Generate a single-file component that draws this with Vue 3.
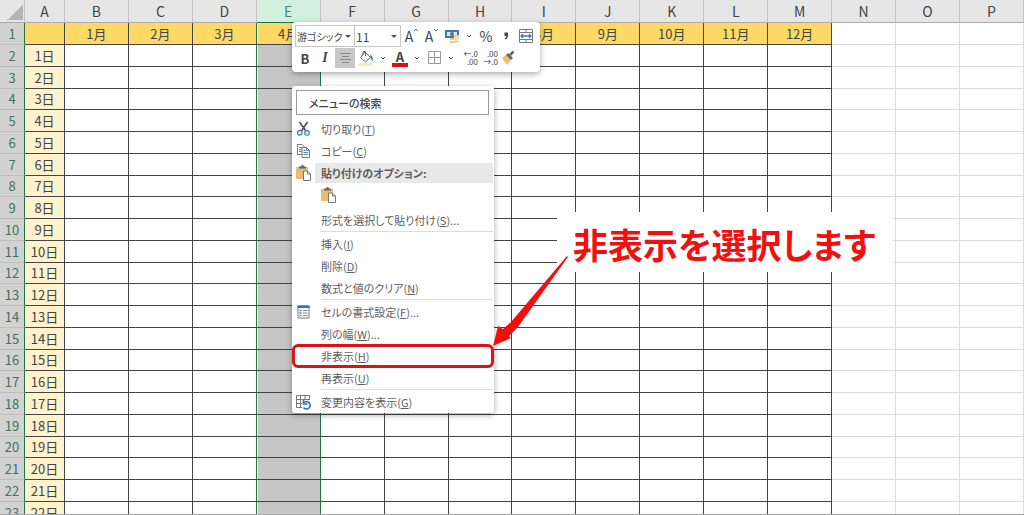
<script setup>
const columns = 'ABCDEFGHIJKLMNOP'.split('')
const rows = Array.from({ length: 23 }, (_, i) => i + 1)

function cellText(row, col) {
  if (row === 1) return col > 0 && col < 13 ? `${col}月` : ''
  return col === 0 ? `${row - 1}日` : ''
}

function cellClass(row, col) {
  return {
    month: row === 1 && col < 13,
    day: row > 1 && col === 0,
    lined: col < 13,
    picked: col === 4,
    before: col === 3,
  }
}

const groups = [
  [
    { icon: 'cut', label: '切り取り', key: 'T' },
    { icon: 'copy', label: 'コピー', key: 'C' },
    { icon: 'paste', heading: '貼り付けのオプション:' },
    { option: true },
    { label: '形式を選択して貼り付け', key: 'S', tail: '...' },
  ],
  [
    { label: '挿入', key: 'I' },
    { label: '削除', key: 'D' },
    { label: '数式と値のクリア', key: 'N' },
  ],
  [
    { icon: 'format', label: 'セルの書式設定', key: 'F', tail: '...' },
    { label: '列の幅', key: 'W', tail: '...' },
    { label: '非表示', key: 'H', marked: true },
    { label: '再表示', key: 'U' },
  ],
  [{ icon: 'changes', label: '変更内容を表示', key: 'G' }],
]
</script>

<template>
  <main class="workbook">
    <svg class="defs" aria-hidden="true">
      <symbol id="cut" viewBox="0 0 16 16">
        <path d="M3.500 1l6.500 9M11.500 1L5.500 10" stroke="#555" stroke-width="1.700" fill="none" />
        <circle cx="3.800" cy="11.800" r="2.300" fill="none" stroke="#4f86b8" stroke-width="1.300" />
        <circle cx="11" cy="11.800" r="2.300" fill="none" stroke="#4f86b8" stroke-width="1.300" />
      </symbol>
      <symbol id="copy" viewBox="0 0 16 16">
        <path d="M1.500 1.500h4.500l2.500 2.500v7.500h-7z" fill="#fff" stroke="#777" />
        <path d="M3 4.500h3M3 6.500h3M3 8.500h3" stroke="#4f86b8" />
        <path d="M6 4.500h4.500l3 3v7H6z" fill="#fff" stroke="#777" />
        <path d="M10.500 4.500v3h3" fill="none" stroke="#777" />
        <path d="M7.500 9.500H12M7.500 11.500H12M7.500 7.500h2" stroke="#4f86b8" />
      </symbol>
      <symbol id="paste" viewBox="0 0 16 16">
        <path d="M0 2h12v12H0z" fill="#e8bd72" />
        <path d="M3 3.500v-2h2a1.500 1.500 0 013 0h2v2z" fill="#666" />
        <path d="M7.500 6h4l3 3v6.500h-7z" fill="#fff" stroke="#777" />
        <path d="M11.500 6v3h3" fill="none" stroke="#777" />
      </symbol>
      <symbol id="format" viewBox="0 0 16 16">
        <path d="M2 2h11v12H2z" fill="#fff" stroke="#777" />
        <path d="M1.500 1.500h12v2.500h-12z" fill="#41719c" />
        <path d="M3.500 6.500h2M3.500 9h2M3.500 11.500h2" stroke="#4f86b8" stroke-width="1.500" />
        <path d="M7 6.500h4.500M7 9h4.500M7 11.500h4.500" stroke="#888" />
      </symbol>
      <symbol id="changes" viewBox="0 0 16 16">
        <path d="M.5 13.500v-12h13V6M.5 13.500H6M.5 5.500h13M.5 9.500H6M4.500 1.500v12M9 1.500V6" fill="none" stroke="#777" />
        <path d="M8 8.500a3.700 3.700 0 11-.5 5" fill="none" stroke="#2f75b5" stroke-width="1.600" />
        <path d="M7.500 6v4h4" fill="none" stroke="#2f75b5" stroke-width="1.600" />
      </symbol>
      <symbol id="chevron" viewBox="0 0 6 4">
        <path d="M1 1l2 2 2-2" fill="none" stroke="#555" />
      </symbol>
    </svg>

    <table class="sheet">
      <colgroup>
        <col class="col-num" />
        <col class="col-day" />
        <col v-for="n in 15" :key="n" />
      </colgroup>
      <thead>
        <tr>
          <th class="corner"></th>
          <th v-for="(c, i) in columns" :key="c" scope="col" :class="{ active: i === 4 }">{{ c }}</th>
        </tr>
      </thead>
      <tbody>
        <tr v-for="r in rows" :key="r">
          <th scope="row">{{ r }}</th>
          <td v-for="(c, i) in columns" :key="c" :class="cellClass(r, i)">{{ cellText(r, i) }}</td>
        </tr>
      </tbody>
    </table>

    <section class="toolbar" aria-label="書式">
      <div class="tools">
        <span class="drop family"><select aria-label="フォント"><option>游ゴシック</option></select></span>
        <span class="drop size"><select aria-label="サイズ"><option>11</option></select></span>
        <button class="tool letter" aria-label="拡大">A<svg class="hat" viewBox="0 0 6 4"><path d="M1 3l2-2 2 2" fill="none" stroke="#3f78ad" /></svg></button>
        <button class="tool letter" aria-label="縮小">A<svg class="hat" viewBox="0 0 6 4"><path d="M1 1l2 2 2-2" fill="none" stroke="#3f78ad" /></svg></button>
        <button class="tool" aria-label="通貨">
          <svg class="icon" viewBox="0 0 16 16">
            <path d="M1 2h14v8H1z" fill="#3f78ad" />
            <path d="M3 4h10v4H3z" fill="#dce9f4" />
            <circle cx="8" cy="6" r="2" fill="#3f78ad" />
            <path d="M6 10h5v5H6zM10 7h5v7h-5z" fill="#edc88c" />
            <path d="M6 12.500h5M10 9.500h5M10 12h5" stroke="#fff" />
          </svg>
        </button>
        <button class="arrow" aria-label="通貨の種類"><svg viewBox="0 0 6 4"><use href="#chevron" /></svg></button>
        <button class="tool percent">%</button>
        <button class="tool" aria-label="桁区切り">
          <svg class="icon" viewBox="0 0 16 16"><path d="M6.500 4.500h3.500v3c0 2-1 3.500-3 4v-1.500c1-.4 1.300-1 1.300-2H6.500z" fill="#444" /></svg>
        </button>
        <button class="tool" aria-label="セルの結合">
          <svg class="icon" viewBox="0 0 16 16">
            <path d="M1.500 1.500h13v13h-13zM1.500 4.500h13M1.500 11.500h13M8 1.500v3M8 11.500v3" fill="#fff" stroke="#777" />
            <path d="M3 8h10M5 6L3 8l2 2M11 6l2 2-2 2" fill="none" stroke="#3f78ad" stroke-width="1.300" />
          </svg>
        </button>
      </div>
      <div class="tools">
        <button class="tool bold">B</button>
        <button class="tool italic">I</button>
        <button class="tool pressed" aria-label="中央揃え">
          <svg class="icon" viewBox="0 0 16 16"><path d="M3 3.500h11M5 6.500h7M3 9.500h11M5 12.500h7" stroke="#888" /></svg>
        </button>
        <button class="tool fill" aria-label="塗りつぶし">
          <svg class="icon" viewBox="0 0 16 16">
            <path d="M7 2l5.500 5.500-5 4.500-5-4.500z" fill="#fff" stroke="#666" />
            <path d="M5 5V1.500h2.500V6" fill="none" stroke="#666" />
            <path d="M12 5c3 1 3 4 2.500 6-1.500-1-2-2.500-2.500-6z" fill="#3f78ad" />
            <path d="M1 13h13v3H1z" fill="#fbe5c0" />
          </svg>
        </button>
        <button class="arrow" aria-label="塗りつぶしの色"><svg viewBox="0 0 6 4"><use href="#chevron" /></svg></button>
        <button class="tool ink">A</button>
        <button class="arrow" aria-label="文字の色"><svg viewBox="0 0 6 4"><use href="#chevron" /></svg></button>
        <button class="tool" aria-label="罫線">
          <svg class="icon" viewBox="0 0 16 16"><path d="M2.500 1.500h12v12h-12zM8.500 1.500v12M2.500 7.500h12" fill="none" stroke="#999" /></svg>
        </button>
        <button class="arrow" aria-label="罫線の種類"><svg viewBox="0 0 6 4"><use href="#chevron" /></svg></button>
        <button class="tool decimals"><span><i>←</i>.0</span><span>.00</span></button>
        <button class="tool decimals"><span>.00</span><span><i>→</i>.0</span></button>
        <button class="tool" aria-label="書式のコピー">
          <svg class="icon" viewBox="0 0 16 16">
            <path d="M2 8l4-3 5 5-4 5z" fill="#eebd70" />
            <path d="M6 5l2-2 5 5-2 2z" fill="#666" />
            <path d="M10 5l3.500-3.500" stroke="#666" stroke-width="2.500" />
          </svg>
        </button>
      </div>
    </section>

    <section class="menu" aria-label="コンテキスト メニュー">
      <input class="search" type="text" placeholder="メニューの検索" aria-label="メニューの検索" />
      <div v-for="(g, gi) in groups" :key="gi" class="group">
        <template v-for="(m, mi) in g" :key="mi">
          <div v-if="m.heading" class="item heading">
            <svg class="glyph"><use :href="'#' + m.icon" /></svg>
            <span class="label">{{ m.heading }}</span>
          </div>
          <div v-else-if="m.option" class="item option">
            <button aria-label="貼り付け"><svg class="glyph"><use href="#paste" /></svg></button>
          </div>
          <button v-else class="item" :class="{ marked: m.marked }">
            <svg class="glyph"><use v-if="m.icon" :href="'#' + m.icon" /></svg>
            <span class="label">{{ m.label }}(<u>{{ m.key }}</u>){{ m.tail }}</span>
          </button>
        </template>
      </div>
    </section>

    <p class="callout">非表示を選択します</p>
    <svg class="pointer" viewBox="0 0 76 92" aria-hidden="true">
      <path d="M75 1L74 0 18 66 10 73 5 70 0 90 18 82 16 80 25 71z" fill="#f01010" />
    </svg>
  </main>
</template>

<style>
body {
  margin: 0;
  background: #fff;
}
</style>

<style scoped>
.workbook {
  position: relative;
  height: 100vh;
  overflow: hidden;
  box-sizing: border-box;
  border-bottom: 1px solid #a6a6a6;
  font-family: "Noto Sans CJK JP", sans-serif;
  color: #444;
}
.defs {
  position: absolute;
  width: 0;
  height: 0;
}
.sheet {
  width: 100%;
  table-layout: fixed;
  border-collapse: separate;
  border-spacing: 0;
}
.col-num {
  width: 25px;
}
.col-day {
  width: 40px;
}
th,
td {
  box-sizing: border-box;
  height: 22px;
  padding: 0;
  font-size: 13px;
  font-weight: 400;
  line-height: 20px;
  text-align: center;
  white-space: nowrap;
  border-right: 1px solid #dcdcdc;
  border-bottom: 1px solid #dcdcdc;
}
tbody tr:nth-child(4n) > * {
  height: 21px;
}
thead th {
  height: 23px;
  background: #e6e6e6;
  border-right-color: #c4c4c4;
  border-bottom-color: #ababab;
  font-size: 14px;
}
thead .active {
  background: #d2f0e0;
  color: #4f8268;
  border-bottom-color: #217346;
}
.corner {
  background: linear-gradient(135deg, transparent 50%, #b4b4b4 50%) 7px 4px / 16px 16px no-repeat #e6e6e6;
}
tbody th {
  background: #d2d2d2;
  color: #48705c;
  border-right-color: #217346;
  border-bottom-color: #bdbdbd;
}
.lined {
  border-color: #444;
}
.month {
  background: #ffd966;
}
.day {
  background: #fff2cc;
}
.picked:not(.month) {
  background: #c6c6c6;
}
.before,
.picked {
  border-right-color: #217346;
}
.picked {
  box-shadow: inset 1px 0 #fff;
}
.toolbar {
  position: absolute;
  top: 22px;
  left: 292px;
  box-sizing: border-box;
  width: 248px;
  padding: 3px;
  background: #fff;
  border-radius: 4px;
  box-shadow: 0 2px 6px #0005;
}
.tools {
  display: flex;
  align-items: center;
  height: 22px;
}
button {
  padding: 0;
  border: 0;
  background: none;
  color: inherit;
  font-family: inherit;
}
.drop {
  position: relative;
  box-sizing: border-box;
  height: 22px;
  border: 1px solid #c8c8c8;
}
.drop::after {
  content: "";
  position: absolute;
  top: 9px;
  right: 3px;
  border: 3px solid transparent;
  border-top-color: #555;
  border-bottom: 0;
  pointer-events: none;
}
.drop select {
  display: block;
  width: 100%;
  height: 20px;
  padding: 0 1px;
  border: 0;
  appearance: none;
  background: none;
  color: #444;
  font: 12px "Noto Sans CJK JP", sans-serif;
  font-feature-settings: "palt";
}
.family {
  width: 60px;
}
.family select {
  font-size: 10px;
}
.size {
  width: 46px;
  margin-right: 1px;
  border-left: 0;
}
.tool {
  display: flex;
  align-items: center;
  justify-content: center;
  width: 20px;
  height: 20px;
  font-size: 13px;
}
.letter,
.percent {
  font-size: 14px;
}
.icon {
  width: 16px;
  height: 16px;
}
.arrow {
  display: flex;
  justify-content: center;
  width: 14px;
}
.arrow svg,
.hat {
  width: 6px;
  height: 4px;
}
.hat {
  align-self: flex-start;
  margin-top: 2px;
}
.bold {
  font-weight: 700;
}
.italic {
  font-family: "Liberation Serif", serif;
  font-size: 14px;
  font-style: italic;
  font-weight: 700;
}
.pressed {
  background: #c8c8c8;
}
.fill {
  margin-left: 1px;
}
.ink {
  height: 17px;
  width: 16px;
  margin: 0 2px;
  border-bottom: 4px solid #e01010;
  font-weight: 700;
  line-height: 13px;
}
.decimals {
  flex-direction: column;
  align-items: flex-end;
  font-size: 8px;
  line-height: 8px;
}
.decimals i {
  color: #2f75b5;
  font-style: normal;
  font-weight: 700;
}
.menu {
  position: absolute;
  top: 86px;
  left: 292px;
  box-sizing: border-box;
  width: 202px;
  padding: 4px 1px 0;
  background: #fff;
  border-radius: 3px;
  box-shadow: 0 2px 6px #0005;
  color: #606060;
}
.search {
  display: block;
  box-sizing: border-box;
  width: 193px;
  height: 25px;
  margin: 0 0 3px 3px;
  padding: 0 12px;
  border: 1px solid #999;
  font: 500 11px "Noto Sans CJK JP", sans-serif;
  font-feature-settings: "palt";
}
.search::placeholder {
  color: #444;
  opacity: 1;
}
.group + .group {
  position: relative;
  padding-top: 2px;
}
.group + .group::before {
  content: "";
  position: absolute;
  top: 0;
  left: 28px;
  right: 0;
  border-top: 1px solid #ddd;
}
.item {
  display: flex;
  align-items: center;
  width: 100%;
  height: 22px;
  font-size: 11px;
  line-height: 20px;
  font-feature-settings: "palt";
}
.glyph {
  flex: none;
  width: 16px;
  height: 16px;
  margin: 0 8px 0 3px;
}
.label {
  padding-left: 1px;
}
.heading .label {
  flex: 1;
  margin-left: -5px;
  padding-left: 6px;
  background: #e8e8e8;
  font-weight: 700;
}
.option {
  box-sizing: border-box;
  height: 25px;
  padding-left: 25px;
}
.marked {
  outline: 3px solid #d81414;
  outline-offset: -2px;
  border-radius: 5px;
}
.callout {
  position: absolute;
  top: 212px;
  left: 557px;
  height: 60px;
  margin: 0;
  padding: 0 18px 0 16px;
  background: #fff;
  color: #f01010;
  font-size: 35px;
  font-weight: 700;
  line-height: 64px;
  white-space: nowrap;
  font-feature-settings: "palt";
}
.pointer {
  position: absolute;
  top: 256px;
  left: 493px;
  width: 76px;
  height: 92px;
}
</style>
